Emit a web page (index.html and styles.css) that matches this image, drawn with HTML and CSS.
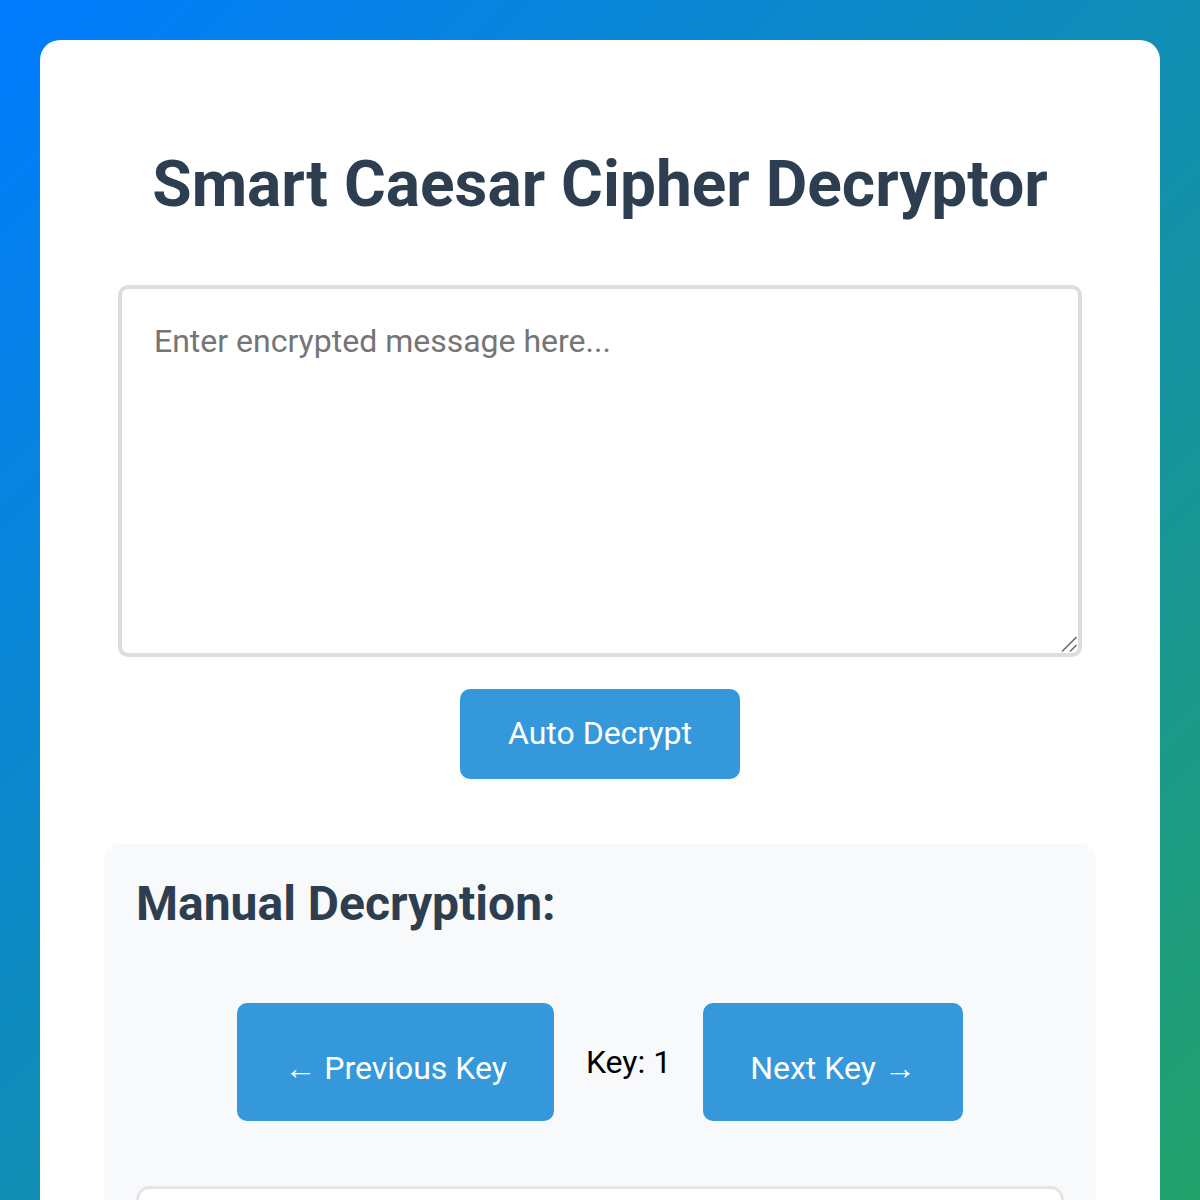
FILE: index.html
```html
<!DOCTYPE html>
<html lang="en">
<head>
<meta charset="utf-8">
<title>Smart Caesar Cipher Decryptor</title>
<link rel="stylesheet" href="styles.css">
</head>
<body>
  <main class="card">
    <h1 class="title">Smart Caesar Cipher Decryptor</h1>
    <div class="input-wrap">
      <textarea class="input" placeholder="Enter encrypted message here..."></textarea>
      <svg class="grip" width="18" height="18" viewBox="0 0 18 18" aria-hidden="true">
        <line x1="2" y1="16.5" x2="16.5" y2="2" stroke="#6b6b6b" stroke-width="1.6"/>
        <line x1="10" y1="16.5" x2="16.5" y2="10" stroke="#6b6b6b" stroke-width="1.6"/>
      </svg>
    </div>
    <div class="actions">
      <button class="btn btn-auto" type="button">Auto Decrypt</button>
    </div>
    <section class="manual">
      <h2 class="manual-title">Manual Decryption:</h2>
      <div class="key-row">
        <button class="btn btn-key" type="button">← Previous Key</button>
        <span class="key-label">Key: 1</span>
        <button class="btn btn-key" type="button">Next Key →</button>
      </div>
      <div class="result"></div>
    </section>
  </main>
</body>
</html>
```
FILE: styles.css
```css
html {
  background: linear-gradient(135deg, #007bff 0%, #22a16b 100%) fixed;
}
body {
  margin: 0;
  padding: 40px 40px 0;
  font-family: Roboto, "Liberation Sans", Arial, sans-serif;
}
.card {
  background: #ffffff;
  border-radius: 20px;
  padding: 64px 64px 64px;
  min-height: 1300px;
  box-sizing: border-box;
}
.title {
  margin: 43px 0 63px;
  font-size: 64px;
  font-weight: 700;
  line-height: 75px;
  color: #2c3e50;
  text-align: center;
}
.input-wrap {
  position: relative;
  margin: 0 14px;
}
.input {
  display: block;
  box-sizing: border-box;
  width: 100%;
  height: 372px;
  margin: 0;
  padding: 34px 32px 30px;
  border: 4px solid #dddddd;
  border-radius: 10px;
  font-family: Roboto, "Liberation Sans", Arial, sans-serif;
  font-size: 32px;
  line-height: 37.5px;
  color: #333333;
  background: #ffffff;
  resize: none;
}
.input::placeholder {
  color: #757575;
}
.grip {
  position: absolute;
  right: 4px;
  bottom: 4px;
  pointer-events: none;
}
.actions {
  display: flex;
  justify-content: center;
  margin-top: 32px;
}
.btn {
  border: none;
  border-radius: 10px;
  background: #3498db;
  color: #ffffff;
  font-family: Roboto, "Liberation Sans", Arial, sans-serif;
  font-size: 32px;
  line-height: 37.5px;
  cursor: pointer;
}
.btn-auto {
  padding: 26px 48px;
  height: 90px;
}
.manual {
  margin-top: 65px;
  background: #f8f9fa;
  border-radius: 16px;
  padding: 32px;
  min-height: 500px;
}
.manual-title {
  margin: 0 0 71px;
  font-size: 48px;
  font-weight: 700;
  line-height: 56px;
  color: #2c3e50;
}
.key-row {
  display: flex;
  justify-content: center;
  align-items: center;
  gap: 32px;
}
.btn-key {
  box-sizing: border-box;
  padding: 47px 47px 33px;
  height: 118px;
}
.key-label {
  font-size: 32px;
  color: #000000;
}
.result {
  margin-top: 65px;
  min-height: 200px;
  background: #ffffff;
  border: 3px solid #e3e5e8;
  border-radius: 14px;
}
```
